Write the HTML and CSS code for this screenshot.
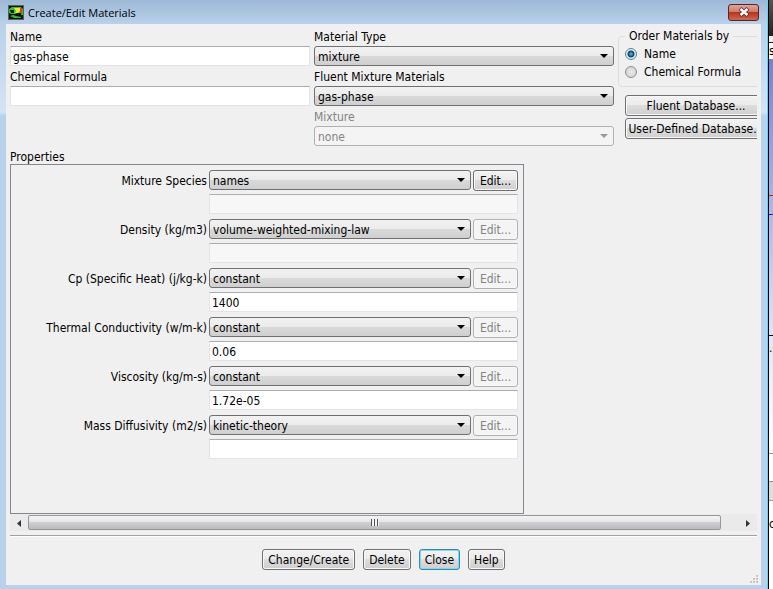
FILE: index.html
```html
<!DOCTYPE html>
<html lang="en">
<head>
    <meta charset="UTF-8">
    <meta name="viewport" content="width=device-width, initial-scale=1.0">
    <title>Create/Edit Materials</title>
    <link rel="stylesheet" href="styles.css">
</head>
<body>

    <main class="dialog">
        <header class="titlebar">
            <svg class="app-icon" width="16" height="15" viewBox="0 0 16 15">
                <rect width="16" height="15" fill="#5a6058"/>
                <rect x="1" y="1" width="14" height="13" fill="#0c120c"/>
                <path d="M1 4l3-2h9l2 2v6h-2V8H9L7 9H3L1 8z" fill="#2fc23c"/>
                <path d="M6 3h6l1 2-3 3H7l1-2z" fill="#f2ea1e"/>
                <path d="M12 3h2v6h-1l-1-3z" fill="#e8381c"/>
                <path d="M2 5h4v3H3z" fill="#0c120c"/>
                <path d="M2 11l3-1 3 1 5 1v1H6z" fill="#2fb83a"/>
            </svg>
            <h1 class="title">Create/Edit Materials</h1>
            <button class="close-btn" type="button" aria-label="Close window">
                <svg width="12" height="10" viewBox="0 0 12 10">
                    <path d="M2 1.5l8 7M10 1.5l-8 7" stroke="#5b2a28" stroke-width="4"/>
                    <path d="M2.500 2l7 6M9.500 2l-7 6" stroke="#fff" stroke-width="2.400"/>
                </svg>
            </button>
        </header>

        <form class="content">
            <div class="viewport">
                <div class="sheet">
                    <section class="top">
                        <div class="column">
                            <label for="name">Name</label>
                            <input type="text" id="name" value="gas-phase">
                            <label for="formula">Chemical Formula</label>
                            <input type="text" id="formula">
                        </div>
                        <div class="column">
                            <label for="type">Material Type</label>
                            <select id="type"><option>mixture</option></select>
                            <label for="fluent">Fluent Mixture Materials</label>
                            <select id="fluent"><option>gas-phase</option></select>
                            <label class="off" for="mixture">Mixture</label>
                            <select id="mixture" disabled><option>none</option></select>
                        </div>
                        <div class="side">
                            <fieldset class="order">
                                <legend>Order Materials by</legend>
                                <label><input type="radio" name="order" checked>Name</label>
                                <label><input type="radio" name="order">Chemical Formula</label>
                            </fieldset>
                            <div class="databases">
                                <button type="button">Fluent Database...</button>
                                <button type="button">User-Defined Database...</button>
                            </div>
                        </div>
                    </section>

                    <h2 class="heading">Properties</h2>
                    <section class="properties">
                        <div class="property">
                            <label for="species">Mixture Species</label>
                            <select id="species"><option>names</option></select>
                            <button type="button">Edit...</button>
                            <input type="text" aria-label="Mixture Species value" disabled>
                        </div>
                        <div class="property">
                            <label for="density">Density (kg/m3)</label>
                            <select id="density"><option>volume-weighted-mixing-law</option></select>
                            <button type="button" disabled>Edit...</button>
                            <input type="text" aria-label="Density value" disabled>
                        </div>
                        <div class="property">
                            <label for="cp">Cp (Specific Heat) (j/kg-k)</label>
                            <select id="cp"><option>constant</option></select>
                            <button type="button" disabled>Edit...</button>
                            <input type="text" aria-label="Cp value" value="1400">
                        </div>
                        <div class="property">
                            <label for="conductivity">Thermal Conductivity (w/m-k)</label>
                            <select id="conductivity"><option>constant</option></select>
                            <button type="button" disabled>Edit...</button>
                            <input type="text" aria-label="Thermal Conductivity value" value="0.06">
                        </div>
                        <div class="property">
                            <label for="viscosity">Viscosity (kg/m-s)</label>
                            <select id="viscosity"><option>constant</option></select>
                            <button type="button" disabled>Edit...</button>
                            <input type="text" aria-label="Viscosity value" value="1.72e-05">
                        </div>
                        <div class="property">
                            <label for="diffusivity">Mass Diffusivity (m2/s)</label>
                            <select id="diffusivity"><option>kinetic-theory</option></select>
                            <button type="button" disabled>Edit...</button>
                            <input type="text" aria-label="Mass Diffusivity value">
                        </div>
                    </section>
                </div>
            </div>

            <div class="scrollbar">
                <button class="arrow" type="button" aria-label="Scroll left">
                    <svg width="4" height="7" viewBox="0 0 4 7"><path d="M4 0v7L0 3.500z" fill="#333"/></svg>
                </button>
                <div class="track">
                    <div class="thumb"><span class="grip"></span></div>
                </div>
                <button class="arrow" type="button" aria-label="Scroll right">
                    <svg width="4" height="7" viewBox="0 0 4 7"><path d="M0 0v7l4-3.500z" fill="#333"/></svg>
                </button>
            </div>

            <footer class="actions">
                <button type="button">Change/Create</button>
                <button type="button">Delete</button>
                <button class="default" type="button">Close</button>
                <button type="button">Help</button>
            </footer>
            <svg class="resize" width="9" height="9" viewBox="0 0 9 9" fill="#b9b5a8">
                <path d="M7 0h1v1H7zM7 3h1v1H7zM7 6h1v1H7zM4 3h1v1H4zM4 6h1v1H4zM1 6h1v1H1z"/>
                <path d="M6 0h2v2H6zM6 3h2v2H6zM6 6h2v2H6zM3 3h2v2H3zM3 6h2v2H3zM0 6h2v2H0z" opacity=".6"/>
            </svg>
        </form>
    </main>

    <!-- sliver of the main window behind the dialog -->
    <aside class="behind">
        <div class="menu"></div>
        <div class="tab">s</div>
        <div class="plot">
            <span class="red-line"></span>
            <span class="blue-line"></span>
        </div>
        <div class="legend">.0</div>
        <div class="gap"></div>
        <div class="bar"></div>
        <div class="console">c</div>
    </aside>

</body>
</html>
```

FILE: styles.css
```css
* {
    box-sizing: border-box;
}

body {
    margin: 0;
    display: flex;
    min-height: 100vh;
    overflow: hidden;
    font-family: "DejaVu Sans Condensed", "DejaVu Sans", sans-serif;
    font-size: 12px;
    line-height: 16px;
    color: #000;
    background-color: #fff;
}

button, input, select {
    font: inherit;
    color: inherit;
    margin: 0;
}

/* window frame */
.dialog {
    flex: 1;
    min-width: 0;
    display: flex;
    flex-direction: column;
    padding: 0 6px 4px;
    background: linear-gradient(#9db8d6, #b9d1ea 24px, #d5e4f3 112px, #b9d1ea 116px);
    border-right: 1px solid #5fd5f5;
    box-shadow: 1px 0 0 #000;
    position: relative;
}

.titlebar {
    display: flex;
    align-items: center;
    gap: 4px;
    height: 24px;
    padding: 0 2px;
}

.title {
    flex: 1;
    margin: 0;
    padding-top: 2px;
    font-family: "Open Sans", "Noto Sans", sans-serif;
    font-size: 11px;
    font-weight: normal;
}

.close-btn {
    display: flex;
    align-items: center;
    justify-content: center;
    width: 31px;
    height: 17px;
    padding: 0;
    border: 1px solid #5a2326;
    border-radius: 3px;
    background: linear-gradient(#e0a598, #cf7566 50%, #b8341f 50%, #cc6a50);
}

.content {
    flex: 1;
    display: flex;
    flex-direction: column;
    padding: 4px 4px 0;
    background-color: #f0f0f0;
}

.viewport {
    overflow: hidden;
}

.sheet {
    min-width: 766px;
}

/* controls */
input[type="text"] {
    height: 20px;
    padding: 1px 2px 0;
    border: 1px solid #e3e3e8;
    border-top-color: #abadb3;
    border-radius: 1px;
    background-color: #fff;
}

input[type="text"]:disabled {
    background-color: #f7f7f7;
}

select {
    appearance: none;
    height: 20px;
    padding: 1px 20px 0 3px;
    border: 1px solid #707070;
    border-radius: 3px;
    background:
        url("data:image/svg+xml,%3Csvg xmlns='http://www.w3.org/2000/svg' width='8' height='4'%3E%3Cpath d='M0 0h8L4 4z'/%3E%3C/svg%3E") no-repeat right 5px center,
        linear-gradient(#f2f2f2, #ebebeb 50%, #dadada 50%, #cfcfcf);
}

select:disabled {
    color: #838383;
    border-color: #adb2b5;
    opacity: 1;
    background:
        url("data:image/svg+xml,%3Csvg xmlns='http://www.w3.org/2000/svg' width='8' height='4'%3E%3Cpath d='M0 0h8L4 4z' fill='%23999'/%3E%3C/svg%3E") no-repeat right 5px center,
        #f4f4f4;
}

.databases button,
.property button,
.actions button {
    height: 21px;
    padding: 0 5px;
    border: 1px solid #707070;
    border-radius: 3px;
    background: linear-gradient(#f2f2f2, #ebebeb 50%, #dddddd 50%, #cfcfcf);
    box-shadow: inset 0 0 0 1px #f8f8f8;
    white-space: nowrap;
}

.property button:disabled {
    color: #838383;
    border-color: #adb2b5;
    background: #f4f4f4;
}

.off {
    color: #838383;
}

/* top part */
.top {
    display: grid;
    grid-template-columns: 300px 300px 1fr;
    gap: 4px;
    padding-top: 2px;
}

.column {
    display: flex;
    flex-direction: column;
}

.column label {
    padding-bottom: 2px;
    line-height: 14px;
}

.column input,
.column select {
    margin-bottom: 4px;
}

.order {
    margin: 0;
    padding: 3px 6px 5px;
    border: 1px solid #d5dfe5;
    border-radius: 4px;
}

.order legend {
    padding: 0 4px;
    line-height: 12px;
}

.order label {
    display: flex;
    align-items: center;
    gap: 7px;
    height: 18px;
}

.order input {
    appearance: none;
    width: 12px;
    height: 12px;
    border: 1px solid #8e8f8f;
    border-radius: 50%;
    background: radial-gradient(#e8e8e8, #d0d0d0);
}

.order input:checked {
    border-color: #5c7f99;
    background: radial-gradient(circle, #5cc0e8 0, #0b3f63 3px, #e8f0f4 4px);
}

.databases {
    display: flex;
    flex-direction: column;
    gap: 2px;
    padding: 8px 9px 0 7px;
}

.databases button {
    padding: 0 2px;
}

.heading {
    margin: 0;
    font-size: 12px;
    font-weight: normal;
    line-height: 14px;
}

.properties {
    width: 514px;
    min-height: 350px;
    padding: 5px 5px 5px 4px;
    border: 1px solid #828790;
}

.property {
    display: grid;
    grid-template-columns: 1fr 262px 45px;
    column-gap: 2px;
    row-gap: 3px;
    margin-bottom: 5px;
}

.property label {
    align-self: center;
    text-align: right;
}

.property input {
    grid-column: 2 / 4;
}

/* scrollbar */
.scrollbar {
    display: flex;
    height: 17px;
    padding-top: 1px;
    background-color: #eaeaea;
}

.arrow {
    display: flex;
    align-items: center;
    justify-content: center;
    width: 18px;
    padding: 0;
    border: none;
    background: none;
}

.track {
    flex: 1;
}

/* visible part of the sheet */
.thumb {
    display: flex;
    align-items: center;
    justify-content: center;
    width: calc(100% * 747 / 766);
    height: 15px;
    border: 1px solid #979797;
    border-radius: 2px;
    background: linear-gradient(#f4f4f5, #e6e6e8 45%, #cfcfd2 50%, #bcbcc0);
}

.grip {
    width: 8px;
    height: 7px;
    background: repeating-linear-gradient(90deg, #555 0 1px, #f4f4f4 1px 3px);
}

.actions {
    display: flex;
    justify-content: center;
    gap: 8px;
    margin-top: 4px;
    padding-top: 13px;
    border-top: 1px solid #a0a0a0;
    box-shadow: inset 0 1px 0 #fff;
}

.actions .default {
    border-color: #2f8bb8;
    box-shadow: inset 0 0 0 1px #7fd6f5;
}

.resize {
    position: absolute;
    right: 8px;
    bottom: 5px;
}

/* window behind */
.behind {
    width: 5px;
    padding-left: 1px;
    display: flex;
    flex-direction: column;
    overflow: hidden;
}

.menu {
    height: 43px;
    border-bottom: 1px solid #222;
    background: linear-gradient(#555, #222 36px, #f0f0f0 36px);
}

.tab {
    height: 16px;
}

.plot {
    height: 277px;
    border-bottom: 1px solid #111;
    background: linear-gradient(#6f84d6, #dfe2f8);
}

.red-line,
.blue-line {
    display: block;
    height: 137px;
    border-bottom: 1px solid #d02038;
}

.blue-line {
    height: 19px;
    border-color: #2020c0;
}

.legend {
    height: 118px;
    padding-top: 4px;
    border-bottom: 1px solid #999;
    background: linear-gradient(#e3e5f9, #fff);
}

.gap {
    height: 27px;
}

.bar {
    height: 20px;
    border: solid #999;
    border-width: 1px 0;
    background-color: #ddd;
}

.console {
    padding-top: 15px;
}
```
